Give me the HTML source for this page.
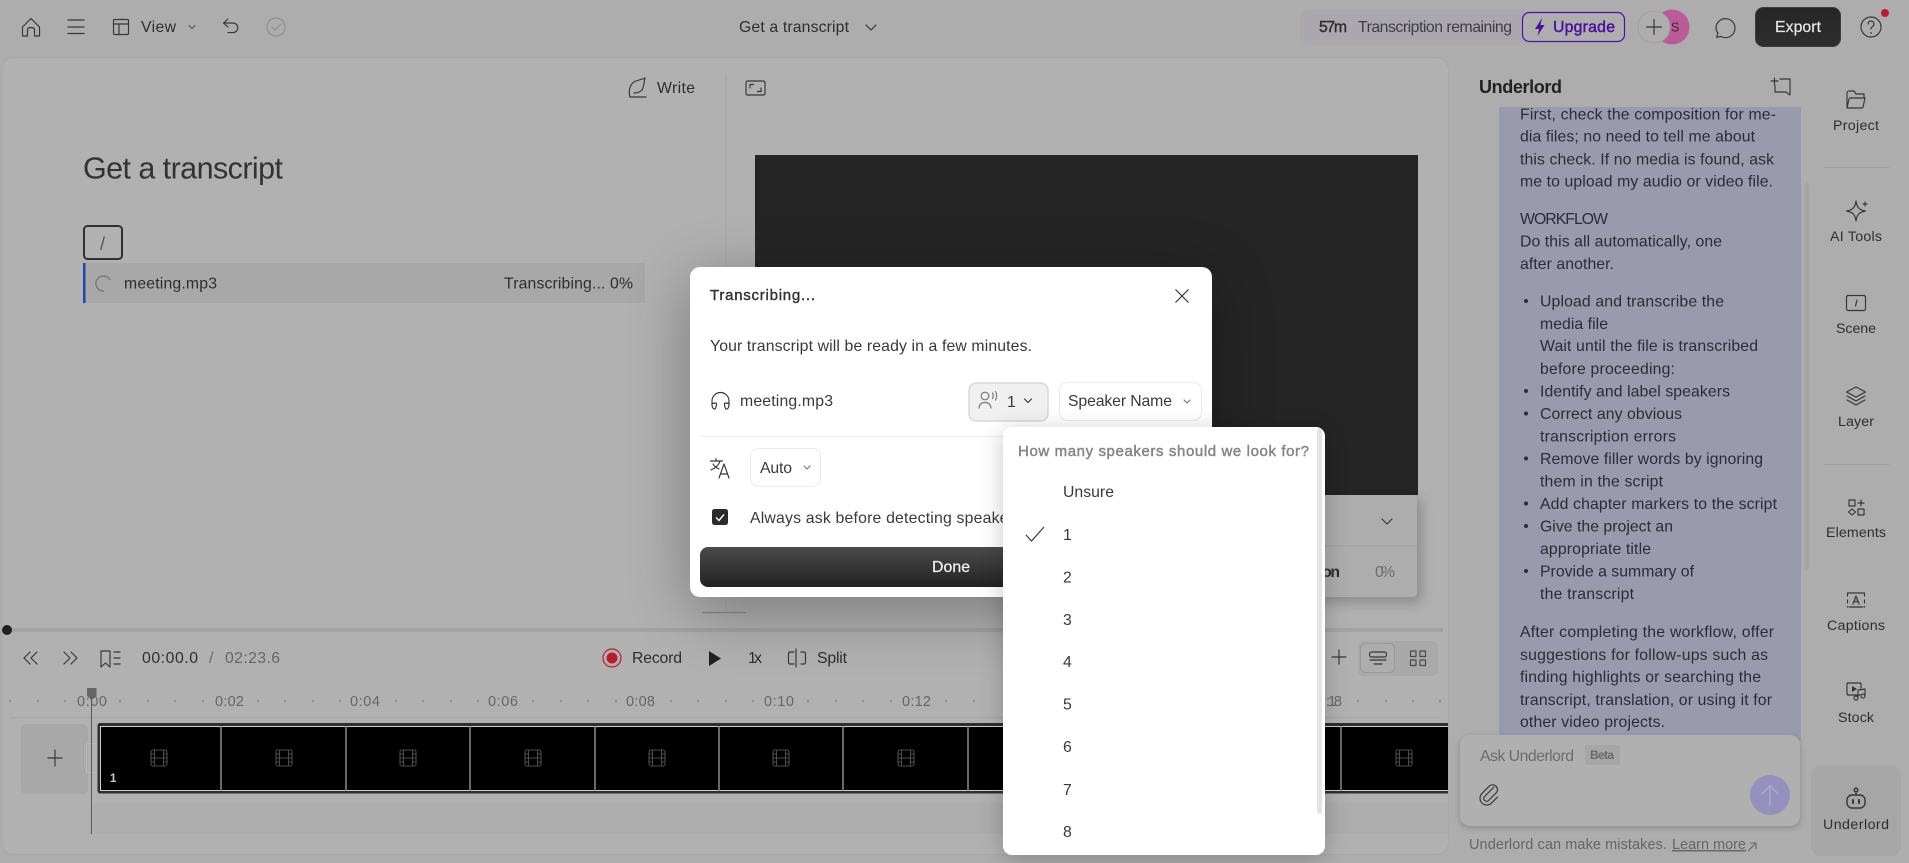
<!DOCTYPE html>
<html lang="en"><head><meta charset="utf-8"><title>Get a transcript</title>
<style>
html,body{margin:0;padding:0;width:1909px;height:863px;overflow:hidden;background:#adadad}
svg{display:block;position:absolute;left:0;top:0}
text{font-family:"Liberation Sans",sans-serif;font-size:15.800px;fill:#2e2e2e;white-space:pre}
.m text{font-size:15.800px;fill:#2c2c34}
.s text{font-size:14.200px;fill:#2e2e2e}
.r text{font-size:14.500px;fill:#666}
.d text{fill:#3a3a3a}
.i{fill:none;stroke:#363636;stroke-width:1.150;stroke-linecap:round;stroke-linejoin:round}
</style></head>
<body>
<svg width="1909" height="863" viewBox="0 0 1909 863" xmlns="http://www.w3.org/2000/svg">
<defs>
<filter id="b30" x="-50%" y="-50%" width="200%" height="200%"><feGaussianBlur stdDeviation="32"/></filter>
<filter id="b12" x="-30%" y="-30%" width="160%" height="160%"><feGaussianBlur stdDeviation="12"/></filter>
<filter id="b6" x="-30%" y="-30%" width="160%" height="160%"><feGaussianBlur stdDeviation="6"/></filter>
<filter id="b3" x="-10%" y="-10%" width="120%" height="120%"><feGaussianBlur stdDeviation="3"/></filter>
<linearGradient id="dn" x1="0" y1="0" x2="0" y2="1"><stop offset="0" stop-color="#4a4a4a"/><stop offset="1" stop-color="#232323"/></linearGradient>
<linearGradient id="ex" x1="0" y1="0" x2="0" y2="1"><stop offset="0" stop-color="#262626"/><stop offset="1" stop-color="#2e2e2e"/></linearGradient>
<g id="film" fill="none" stroke="#4c4c4c" stroke-width="1.100"><rect x="-8" y="-8" width="16" height="16" rx="2"/><path d="M-4.500-8V8M4.500-8V8M-4.500 0H4.500M-8-4H-4.500M-8 0H-4.500M-8 4H-4.500M4.500-4H8M4.500 0H8M4.500 4H8"/></g>
</defs>

<!-- page -->
<rect width="1909" height="863" fill="#adadad"/>

<!-- top bar -->
<path class="i" d="M22.500 27 31 18.500 39.500 27V36H34.500V30Q34.500 27.500 31 27.500T27.500 30V36H22.500Z"/>
<path class="i" d="M68 20H84M68 27H84M68 33.500H84"/>
<g class="i"><rect x="113.500" y="19.500" width="15" height="15" rx="1"/><path d="M113.500 24H128.500M119 24V34.500"/></g>
<text x="141" y="32" textLength="35" lengthAdjust="spacing">View</text>
<path class="i" d="M189 25.500l3 3 3-3" style="stroke:#555"/>
<path class="i" d="M228 19l-4.500 4 4.500 4M224 23H233a4.800 4.800 0 0 1 0 9.600H228"/>
<g class="i" style="stroke:#8f8f8f"><circle cx="276" cy="27" r="9"/><path d="M272 27l3 3 5.500-5.500"/></g>
<text x="739" y="32" textLength="110" lengthAdjust="spacing">Get a transcript</text>
<path class="i" d="M866 25l5 5 5-5"/>

<rect x="1300" y="10" width="232" height="35" rx="10" fill="#aaa7ae"/>
<text x="1319" y="32" textLength="28" lengthAdjust="spacing" style="stroke:#2e2e2e;stroke-width:.4">57m</text>
<text x="1358" y="32" textLength="154" lengthAdjust="spacing" style="fill:#3e3e44">Transcription remaining</text>
<rect x="1522.500" y="12.500" width="102" height="29" rx="7" fill="#aeaeae" stroke="#4f10a8" stroke-width="1.200"/>
<path d="M1542 18 1535 29h4l-1.500 7 7-11h-4l1.500-7z" fill="#4b0fa0"/>
<text x="1553" y="32" textLength="62" lengthAdjust="spacing" style="fill:#4b0fa0;stroke:#4b0fa0;stroke-width:.45">Upgrade</text>
<circle cx="1672" cy="27" r="17.500" fill="#ba5c98"/>
<text x="1671" y="31.500" textLength="9" lengthAdjust="spacing" style="fill:#442040;font-size:12.500px">S</text>
<circle cx="1654" cy="27" r="16" fill="#aeaeae" stroke="#a0a0a0"/>
<path class="i" d="M1654 19.500V34.500M1646.500 27H1661.500"/>
<path class="i" d="M1716 28a9.500 9.500 0 1 1 5 8.500l-4.500.800 1.500-4A9.500 9.500 0 0 1 1716 28Z"/>
<rect x="1755.500" y="7.500" width="85" height="39" rx="8" fill="url(#ex)" stroke="#3c3c3c"/>
<text x="1775" y="32" textLength="46" lengthAdjust="spacing" style="fill:#e8e8e8;stroke:#e8e8e8;stroke-width:.2">Export</text>
<g class="i"><circle cx="1871" cy="27" r="10"/><path d="M1868 24a3 3 0 1 1 4.500 2.600c-1 .6-1.500 1.200-1.500 2.400"/></g>
<circle cx="1871" cy="33" r=".9" fill="#333"/>
<circle cx="1885" cy="13" r="4" fill="#b81c2c"/>

<!-- main panel -->
<rect x="1.500" y="57.500" width="1447" height="797" rx="12" fill="#b1b1b1" stroke="#a9a9a9"/>
<path d="M726 75V612" stroke="#a8a8a8"/>

<path class="i" d="M630 97c-2-6 0-14 6-16 3-1 7-2 9-3-1 4-1 9-3 12-2 2-5 3-8 3M630 97h16"/>
<text x="657" y="93" textLength="38" lengthAdjust="spacing">Write</text>
<g class="i"><rect x="746" y="81" width="19" height="14" rx="1.500"/><path d="M750 88v-3.500h3.500M761 88v3.500h-3.500"/></g>

<text x="83" y="178.500" textLength="200" lengthAdjust="spacing" style="font-size:30.500px;fill:#333">Get a transcript</text>
<rect x="84" y="226" width="38" height="33" rx="3.500" fill="none" stroke="#303030" stroke-width="2"/>
<text x="100" y="250" style="font-size:18px;fill:#555">/</text>
<rect x="83" y="263" width="562" height="40" fill="#a8a8a8"/>
<rect x="83" y="263" width="2.500" height="40" fill="#1c46b8"/>
<path d="M104 291a7.500 7.500 0 1 1 6-11" fill="none" stroke="#787878" stroke-width="1.400"/>
<text x="124" y="288.500" textLength="93" lengthAdjust="spacing">meeting.mp3</text>
<text x="504" y="288.500" textLength="129" lengthAdjust="spacing">Transcribing... 0%</text>

<!-- video preview -->
<rect x="755" y="155" width="663" height="340" fill="#252525"/>
<rect x="1200" y="499" width="222" height="104" rx="4" fill="#000" opacity=".2" filter="url(#b6)"/>
<rect x="1200" y="495" width="217" height="102" rx="4" fill="#adadad"/>
<path d="M1200 546H1417" stroke="#9f9f9f"/>
<path class="i" d="M1382 519l5 5 5-5"/>
<text x="1290" y="577" textLength="50" lengthAdjust="spacing" style="font-weight:700">Caption</text>
<text x="1375" y="577" textLength="20" lengthAdjust="spacing" style="fill:#6c6c6c">0%</text>

<!-- scrubber -->
<rect x="3" y="628" width="1440" height="4" fill="#a3a3a3"/>
<circle cx="7" cy="630" r="5" fill="#202020"/>

<!-- transport -->
<path class="i" d="M30 652l-6 6 6 6M37 652l-6 6 6 6"/>
<path class="i" d="M64 652l6 6-6 6M71 652l6 6-6 6"/>
<path class="i" d="M101 651h9v16l-4.500-4-4.500 4zM114 652h6M114 658h6M114 664h6"/>
<text x="142" y="663" textLength="56" lengthAdjust="spacing">00:00.0</text>
<text x="209" y="663" style="fill:#6a6a6a">/</text>
<text x="225" y="663" textLength="55" lengthAdjust="spacing" style="fill:#666">02:23.6</text>
<circle cx="612" cy="658" r="9" fill="none" stroke="#b81c2c" stroke-width="1.200"/>
<circle cx="612" cy="658" r="5.500" fill="#b81c2c"/>
<text x="632" y="663" textLength="50" lengthAdjust="spacing">Record</text>
<path d="M709 651l12 7.500-12 7.500z" fill="#222"/>
<text x="748" y="663" textLength="14" lengthAdjust="spacing">1x</text>
<path class="i" d="M794 652h-4a1.500 1.500 0 0 0-1.500 1.500v9a1.500 1.500 0 0 0 1.500 1.500h4M796 649v18M801 652h3a1.500 1.500 0 0 1 1.500 1.500v9a1.500 1.500 0 0 1-1.500 1.500h-3"/>
<text x="817" y="663" textLength="30" lengthAdjust="spacing">Split</text>

<path class="i" d="M1339 650V664M1332 657H1346"/>
<rect x="1358" y="641" width="80" height="35" rx="6" fill="#a9a9a9"/>
<rect x="1360.500" y="643.500" width="34" height="29" rx="5" fill="#adadad" stroke="#9a9a9a"/>
<g class="i"><rect x="1369.500" y="652" width="17" height="5" rx="2"/><path d="M1370 660H1386M1374 664H1382"/></g>
<g class="i" style="stroke:#4a4a4a"><rect x="1410.500" y="651" width="5.500" height="5.500"/><rect x="1420" y="651" width="5.500" height="5.500"/><rect x="1410.500" y="660" width="5.500" height="5.500"/><rect x="1420" y="660" width="5.500" height="5.500"/></g>

<!-- ruler -->
<g fill="#929292">
<circle cx="10" cy="701" r="1.200"/><circle cx="38" cy="701" r="1.200"/><circle cx="65" cy="701" r="1.200"/>
<circle cx="120" cy="701" r="1.200"/><circle cx="148" cy="701" r="1.200"/><circle cx="175" cy="701" r="1.200"/><circle cx="203" cy="701" r="1.200"/>
<circle cx="258" cy="701" r="1.200"/><circle cx="285" cy="701" r="1.200"/><circle cx="313" cy="701" r="1.200"/><circle cx="340" cy="701" r="1.200"/>
<circle cx="396" cy="701" r="1.200"/><circle cx="423" cy="701" r="1.200"/><circle cx="451" cy="701" r="1.200"/><circle cx="478" cy="701" r="1.200"/>
<circle cx="533" cy="701" r="1.200"/><circle cx="561" cy="701" r="1.200"/><circle cx="588" cy="701" r="1.200"/><circle cx="616" cy="701" r="1.200"/>
<circle cx="671" cy="701" r="1.200"/><circle cx="698" cy="701" r="1.200"/><circle cx="726" cy="701" r="1.200"/><circle cx="753" cy="701" r="1.200"/>
<circle cx="808" cy="701" r="1.200"/><circle cx="836" cy="701" r="1.200"/><circle cx="863" cy="701" r="1.200"/><circle cx="891" cy="701" r="1.200"/>
<circle cx="946" cy="701" r="1.200"/><circle cx="974" cy="701" r="1.200"/><circle cx="1358" cy="701" r="1.200"/><circle cx="1386" cy="701" r="1.200"/><circle cx="1413" cy="701" r="1.200"/><circle cx="1440" cy="701" r="1.200"/>
</g>
<g class="r">
<text x="77" y="706" textLength="30" lengthAdjust="spacing">0:00</text>
<text x="215" y="706" textLength="29" lengthAdjust="spacing">0:02</text>
<text x="350" y="706" textLength="30" lengthAdjust="spacing">0:04</text>
<text x="488" y="706" textLength="30" lengthAdjust="spacing">0:06</text>
<text x="626" y="706" textLength="29" lengthAdjust="spacing">0:08</text>
<text x="764" y="706" textLength="30" lengthAdjust="spacing">0:10</text>
<text x="902" y="706" textLength="29" lengthAdjust="spacing">0:12</text>
<text x="1326" y="706" textLength="16" lengthAdjust="spacing">:18</text>
</g>
<path d="M10 717.500H1440" stroke="#a5a5a5"/>

<!-- tracks -->
<rect x="21" y="724" width="67" height="70" rx="5" fill="#a8a8a8"/>
<path class="i" d="M55 750V766M48 758H62"/>
<rect x="86.500" y="743.500" width="12" height="29" rx="2" fill="none" stroke="#bcbcbc"/>
<path d="M1448 723H100a2.500 2.500 0 0 0-2.500 2.500V791a2.500 2.500 0 0 0 2.500 2.500H1448Z" fill="#2e2e2e"/>
<rect x="100" y="726" width="1348" height="65" fill="#000"/>
<path d="M100 726.500H1448M100 790.500H1448" stroke="#d0d0d0"/>
<path d="M100.500 726V791" stroke="#d0d0d0"/>
<g stroke="#8c8c8c" stroke-width="1.500"><path d="M221 726V791M346 726V791M470 726V791M595 726V791M719 726V791M843 726V791M968 726V791M1092 726V791M1217 726V791M1341 726V791"/></g>
<use href="#film" x="159" y="758"/><use href="#film" x="284" y="758"/><use href="#film" x="408" y="758"/><use href="#film" x="533" y="758"/><use href="#film" x="657" y="758"/><use href="#film" x="781" y="758"/><use href="#film" x="906" y="758"/><use href="#film" x="1404" y="758"/>
<text x="110" y="782" style="font-size:11.500px;font-weight:700;fill:#cfcfcf">1</text>
<rect x="94" y="803" width="1354" height="31" rx="3" fill="#adadad"/>
<path d="M87 688h9.500v8l-4.750 4-4.750-4z" fill="#666"/>
<path d="M91.500 697V834" stroke="#5a5a5a"/>

<!-- underlord panel -->
<text x="1479" y="93" textLength="83" lengthAdjust="spacing" style="font-size:18px;font-weight:700;fill:#222">Underlord</text>
<path class="i" d="M1780 79H1790V95L1786 92H1775V86M1771 81h7M1774.500 78v7"/>
<rect x="1499" y="107" width="302" height="634" fill="#9a9aaf"/>
<g class="m">
<text x="1520" y="119.500" textLength="256" lengthAdjust="spacing">First, check the composition for me-</text>
<text x="1520" y="141.500" textLength="235" lengthAdjust="spacing">dia files; no need to tell me about</text>
<text x="1520" y="164.500" textLength="254" lengthAdjust="spacing">this check. If no media is found, ask</text>
<text x="1520" y="186.500" textLength="253" lengthAdjust="spacing">me to upload my audio or video file.</text>
<text x="1520" y="224" textLength="88" lengthAdjust="spacing">WORKFLOW</text>
<text x="1520" y="246.500" textLength="202" lengthAdjust="spacing">Do this all automatically, one</text>
<text x="1520" y="269" textLength="94" lengthAdjust="spacing">after another.</text>
<text x="1540" y="306.500" textLength="184" lengthAdjust="spacing">Upload and transcribe the</text>
<text x="1540" y="329" textLength="68" lengthAdjust="spacing">media file</text>
<text x="1540" y="351" textLength="218" lengthAdjust="spacing">Wait until the file is transcribed</text>
<text x="1540" y="374" textLength="135" lengthAdjust="spacing">before proceeding:</text>
<text x="1540" y="396.500" textLength="190" lengthAdjust="spacing">Identify and label speakers</text>
<text x="1540" y="419" textLength="142" lengthAdjust="spacing">Correct any obvious</text>
<text x="1540" y="441.500" textLength="136" lengthAdjust="spacing">transcription errors</text>
<text x="1540" y="464" textLength="223" lengthAdjust="spacing">Remove filler words by ignoring</text>
<text x="1540" y="486.500" textLength="123" lengthAdjust="spacing">them in the script</text>
<text x="1540" y="509" textLength="237" lengthAdjust="spacing">Add chapter markers to the script</text>
<text x="1540" y="531.500" textLength="133" lengthAdjust="spacing">Give the project an</text>
<text x="1540" y="554" textLength="111" lengthAdjust="spacing">appropriate title</text>
<text x="1540" y="576.500" textLength="154" lengthAdjust="spacing">Provide a summary of</text>
<text x="1540" y="599" textLength="94" lengthAdjust="spacing">the transcript</text>
<text x="1520" y="637" textLength="254" lengthAdjust="spacing">After completing the workflow, offer</text>
<text x="1520" y="660" textLength="248" lengthAdjust="spacing">suggestions for follow-ups such as</text>
<text x="1520" y="682" textLength="241" lengthAdjust="spacing">finding highlights or searching the</text>
<text x="1520" y="705" textLength="252" lengthAdjust="spacing">transcript, translation, or using it for</text>
<text x="1520" y="727" textLength="145" lengthAdjust="spacing">other video projects.</text>
</g>
<g fill="#2c2c34"><circle cx="1526" cy="301" r="2"/><circle cx="1526" cy="391" r="2"/><circle cx="1526" cy="413.500" r="2"/><circle cx="1526" cy="458.500" r="2"/><circle cx="1526" cy="503.500" r="2"/><circle cx="1526" cy="526" r="2"/><circle cx="1526" cy="571" r="2"/></g>
<rect x="1804.500" y="183" width="5" height="387" rx="2.500" fill="#a5a5a5"/>

<!-- ask box -->
<rect x="1460" y="737" width="340" height="91" rx="10" fill="#000" opacity=".2" filter="url(#b3)"/>
<rect x="1460" y="735" width="340" height="91" rx="10" fill="#b0b0b0"/>
<text x="1480" y="761" textLength="94" lengthAdjust="spacing" style="fill:#6c6c6c">Ask Underlord</text>
<rect x="1585" y="745" width="35" height="20" rx="2" fill="#a6a6a6"/>
<text x="1590" y="759" textLength="24" lengthAdjust="spacing" style="font-size:12px;font-weight:700;fill:#6a6a6a">Beta</text>
<path class="i" d="M1495 788l-9.500 9.500a2.800 2.800 0 0 0 4 4l7.500-7.500a4.800 4.800 0 0 0-6.800-6.800l-7.500 7.500a6.800 6.800 0 0 0 9.600 9.600l6.200-6.200" transform="translate(-1 -1)"/>
<circle cx="1770" cy="795" r="20" fill="#9590bd"/>
<path d="M1770 805V786M1762 794l8-8.500 8 8.500" fill="none" stroke="#aca8cc" stroke-width="1.500" stroke-linecap="round" stroke-linejoin="round"/>
<text x="1469" y="849" textLength="198" lengthAdjust="spacing" style="font-size:14.500px;fill:#666">Underlord can make mistakes.</text>
<text x="1672" y="849" textLength="74" lengthAdjust="spacing" style="font-size:14.500px;fill:#666;text-decoration:underline">Learn more</text>
<path d="M1748 851l8-8M1750 843h6v6" fill="none" stroke="#666" stroke-width="1.100"/>

<!-- side rail -->
<rect x="1811" y="766" width="90" height="90" rx="10" fill="#a6a6a6"/>
<g class="s">
<text x="1833" y="130" textLength="46" lengthAdjust="spacing">Project</text>
<text x="1830" y="241" textLength="52" lengthAdjust="spacing">AI Tools</text>
<text x="1836" y="333" textLength="40" lengthAdjust="spacing">Scene</text>
<text x="1838" y="426" textLength="36" lengthAdjust="spacing">Layer</text>
<text x="1826" y="537" textLength="60" lengthAdjust="spacing">Elements</text>
<text x="1827" y="630" textLength="58" lengthAdjust="spacing">Captions</text>
<text x="1838" y="722" textLength="36" lengthAdjust="spacing">Stock</text>
<text x="1823" y="829" textLength="66" lengthAdjust="spacing">Underlord</text>
</g>
<path d="M1824 167.500H1889M1824 464.500H1889" stroke="#a0a0a0" stroke-width="1.200"/>
<path class="i" d="M1847 108V93a2 2 0 0 1 2-2h5l2 3h8v4M1847 108l2-9a1.500 1.500 0 0 1 1.500-1h14.500l-2 9a1.500 1.500 0 0 1-1.500 1Z"/>
<path class="i" d="M1856 201c.8 6 3 9 9.500 10-6.500 1-8.700 4-9.500 10-.8-6-3-9-9.500-10 6.500-1 8.700-4 9.500-10ZM1863 204h4M1865 202v4"/>
<g class="i"><rect x="1846.500" y="295.500" width="19" height="15" rx="1.500"/><path d="M1857 300l-1.500 6"/></g>
<path class="i" d="M1856 387l9.500 5-9.500 5-9.500-5ZM1847 396l9 5 9-5M1847 400l9 5 9-5"/>
<g class="i"><rect x="1849" y="500" width="6" height="6"/><rect x="1858" y="509" width="6" height="6"/><path d="M1858 503h6M1861 500v6M1852 509l3.500 3-3.500 3-3.500-3z"/></g>
<g class="i"><path d="M1849 593h-1.500v3M1863 593h1.500v3M1847.500 600v3M1864.500 600v3M1847.500 607v-.5M1864.500 607v-.5M1849 607h14M1849 593h14"/><path d="M1853 604l3-8 3 8M1854 601.500h4"/></g>
<g class="i"><path d="M1860 695h-12a1 1 0 0 1-1-1v-10a1 1 0 0 1 1-1h12a1 1 0 0 1 1 1v4"/><path d="M1858 698v-8l7-1v7"/><circle cx="1856" cy="698" r="2"/><circle cx="1863" cy="696" r="2"/></g>
<path d="M1852 686l5 3-5 3z" fill="#333"/>
<g class="i" style="stroke-width:1.400"><rect x="1847" y="795" width="18" height="13" rx="5"/><path d="M1856 795v-3"/><circle cx="1856" cy="790" r="1.800"/><path d="M1853 800v3M1859 800v3" style="stroke-width:2"/></g>

<!-- modal shadow -->
<rect x="690" y="280" width="522" height="331" rx="10" fill="#000" opacity=".32" filter="url(#b30)"/>
<path d="M702 612.500H746" stroke="#777" stroke-width="1.200"/>

<!-- dialog -->
<rect x="690" y="267" width="522" height="330" rx="10" fill="#fff"/>
<g class="d">
<text x="710" y="300" textLength="105" lengthAdjust="spacing" style="font-size:15px;stroke:#333;stroke-width:.4;fill:#333">Transcribing...</text>
<path d="M1175.500 289.500 1188.500 302.500M1188.500 289.500 1175.500 302.500" fill="none" stroke="#333" stroke-width="1.200"/>
<text x="710" y="351" textLength="322" lengthAdjust="spacing">Your transcript will be ready in a few minutes.</text>
<path class="i" d="M712 406v-5a8.500 8.500 0 0 1 17 0v5M712 403.500l3.500-.5c1 0 1.300.8 1 1.700l-.8 3.500c-.3.800-1.200 1-2 .6-1.500-.6-1.700-3.500-1.700-5.300ZM729 403.500l-3.500-.5c-1 0-1.300.8-1 1.700l.8 3.500c.3.800 1.200 1 2 .6 1.500-.6 1.700-3.500 1.700-5.300Z"/>
<text x="740" y="406" textLength="93" lengthAdjust="spacing">meeting.mp3</text>
<rect x="969" y="383" width="79" height="38" rx="7.500" fill="#f0f0f0" stroke="#dcdcdc" stroke-width="1.700"/>
<g class="i" style="stroke:#777"><circle cx="985" cy="396" r="3.800"/><path d="M979 408c.5-4 3-5.500 6-5.500s5.500 1.500 6 5.500M992.500 393c1 1.500 1 4 0 5.500M995.500 391.500c1.500 2.500 1.500 6 0 8.500"/></g>
<text x="1007" y="407" textLength="8" lengthAdjust="spacing" style="font-size:16px">1</text>
<path class="i" d="M1024.500 399l3.500 3.500 3.500-3.500"/>
<rect x="1059.500" y="382.500" width="142" height="38" rx="8" fill="#fff" stroke="#eaeaea"/>
<text x="1068" y="406" textLength="104" lengthAdjust="spacing">Speaker Name</text>
<path class="i" d="M1184 400l3 3 3-3" style="stroke:#777"/>
<path d="M700 436.500H1202" stroke="#f2f2f2" stroke-width="1.800"/>
<path class="i" d="M710.500 461h12M716 458.500v2.500M720 461c-1 4-5 7.500-9 9M713 464c1.500 2.500 3.500 4 6 5M719 478l5-14 5 14M720.500 474h7"/>
<rect x="750.500" y="448.500" width="70" height="38" rx="8" fill="#fff" stroke="#eaeaea"/>
<text x="760" y="473" textLength="32" lengthAdjust="spacing">Auto</text>
<path class="i" d="M804 466l3 3 3-3" style="stroke:#777"/>
<rect x="712" y="509" width="16" height="16" rx="2.500" fill="#2b2b2b"/>
<path d="M716 517.500l3 3 5-6" fill="none" stroke="#fff" stroke-width="1.400"/>
<text x="750" y="523" textLength="272" lengthAdjust="spacing">Always ask before detecting speakers</text>
<rect x="700" y="547" width="502" height="40" rx="8" fill="url(#dn)"/>
<text x="932" y="572" textLength="38" lengthAdjust="spacing" style="fill:#f0f0f0;stroke:#f0f0f0;stroke-width:.25">Done</text>
</g>

<!-- dropdown -->
<rect x="1003" y="431" width="322" height="428" rx="8" fill="#000" opacity=".22" filter="url(#b12)"/>
<rect x="1003" y="427" width="322" height="428" rx="9" fill="#fff"/>
<rect x="1317" y="428" width="5" height="386" rx="2.500" fill="#e4e4e4"/>
<g class="d">
<text x="1018" y="456" textLength="291" lengthAdjust="spacing" style="font-size:15px;fill:#858585;stroke:#858585;stroke-width:.45">How many speakers should we look for?</text>
<text x="1063" y="497" textLength="51" lengthAdjust="spacing">Unsure</text>
<path d="M1026 535l5.500 6 12.500-14" fill="none" stroke="#333" stroke-width="1.100"/>
<text x="1063" y="540">1</text>
<text x="1063" y="582.500">2</text>
<text x="1063" y="625">3</text>
<text x="1063" y="667">4</text>
<text x="1063" y="709.500">5</text>
<text x="1063" y="752">6</text>
<text x="1063" y="795">7</text>
<text x="1063" y="837">8</text>
</g>
</svg>
</body></html>
